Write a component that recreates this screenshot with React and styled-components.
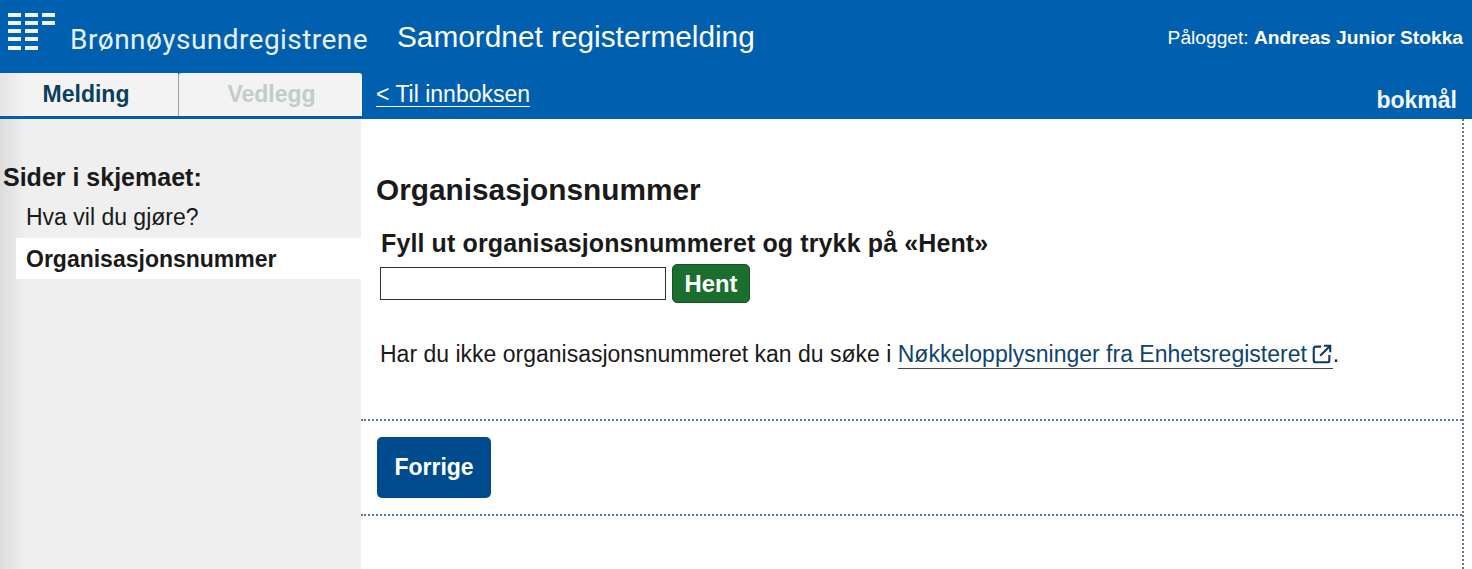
import React from 'react';
import styled, {createGlobalStyle} from 'styled-components';

const GlobalStyle = createGlobalStyle`
  html, body {
    margin: 0;
    padding: 0;
    background: #fff;
    overflow: hidden;
  }
  body {
    font-family: "Liberation Sans", Arial, sans-serif;
    color: #1a1a1a;
  }
`;

const Page = styled.div`
  width: 1472px;
  height: 569px;
  display: flex;
  flex-direction: column;
  overflow: hidden;
`;

const Header = styled.header`
  height: 119px;
  flex: none;
  background: #0060af;
  color: #fff;
  display: flex;
  flex-direction: column;
`;

const TopBar = styled.div`
  height: 73px;
  flex: none;
  display: flex;
  align-items: flex-start;
`;

const Logo = styled.div`
  width: 397px;
  flex: none;
  display: flex;
  padding: 12px 0 0 8px;
  box-sizing: border-box;
`;

const LogoMark = styled.svg`
  width: 47px;
  height: 39px;
  flex: none;
`;

const LogoName = styled.span`
  font-family: Roboto, sans-serif;
  font-size: 28px;
  line-height: 30px;
  letter-spacing: 0.45px;
  color: #e6f1f8;
  margin: 13px 0 0 15px;
  white-space: nowrap;
`;

const AppTitle = styled.div`
  font-size: 29.8px;
  line-height: 34px;
  margin-top: 20px;
  color: #fff;
`;

const User = styled.div`
  margin-left: auto;
  margin-top: 27px;
  margin-right: 9px;
  font-size: 19.2px;
  line-height: 21px;
`;

const NavBar = styled.div`
  flex: 1;
  display: flex;
`;

const Tabs = styled.div`
  width: 362px;
  flex: none;
  height: 43px;
  display: flex;
`;

const Tab = styled.div`
  flex: none;
  width: ${p => p.$width}px;
  box-sizing: border-box;
  padding: ${p => p.$active ? '0 6px 0 0' : '0 0 0 2px'};
  background: ${p => p.$active
    ? 'linear-gradient(to right, #e4e4e4, #f3f3f3 24px)'
    : '#f3f3f3'};
  border-left: ${p => p.$active ? 'none' : '1px solid #9aa3a8'};
  border-radius: ${p => p.$active ? '0' : '3px 3px 0 0'};
  color: ${p => p.$active ? '#0b3f5e' : '#c0cdcb'};
  font-size: 23px;
  font-weight: 700;
  text-align: center;
  line-height: 43px;
`;

const BackLink = styled.a`
  margin: 9px 0 0 14px;
  height: 24px;
  color: #fff;
  font-size: 23px;
  line-height: 24px;
  border-bottom: 1px solid #fff;
  text-decoration: none;
`;

const Language = styled.div`
  margin: 15px 15px 0 auto;
  font-size: 23px;
  font-weight: 700;
  line-height: 24px;
  color: #f2f7fb;
`;

const Body = styled.div`
  flex: 1;
  display: flex;
  min-height: 0;
`;

const Sidebar = styled.aside`
  width: 361px;
  flex: none;
  box-sizing: border-box;
  padding-top: 45px;
  background: linear-gradient(to right, #dcdcdc, #efefef 24px);
`;

const SidebarTitle = styled.div`
  font-size: 25px;
  font-weight: 700;
  line-height: 27px;
  margin-left: 3px;
`;

const SidebarList = styled.ul`
  list-style: none;
  margin: 7px 0 0 16px;
  padding: 0;
`;

const SidebarItem = styled.li`
  height: ${p => p.$current ? '41px' : '40px'};
  padding-left: 10px;
  font-size: 23px;
  line-height: ${p => p.$current ? '42px' : '38px'};
  font-weight: ${p => p.$current ? 700 : 400};
  background: ${p => p.$current ? '#fff' : 'transparent'};
`;

const Main = styled.main`
  width: 1103px;
  flex: none;
  box-sizing: border-box;
  border-right: 2px dotted #6b7780;
  display: flex;
  flex-direction: column;
`;

const Content = styled.div`
  height: 302px;
  flex: none;
  box-sizing: border-box;
  padding: 55px 0 0 15px;
  border-bottom: 2px dotted #4f7a9c;
`;

const Heading = styled.h1`
  margin: 0;
  font-size: 29.8px;
  line-height: 32px;
  font-weight: 700;
`;

const FieldLabel = styled.label`
  display: block;
  margin: 24px 0 0 5px;
  font-size: 25px;
  letter-spacing: 0.12px;
  font-weight: 700;
  line-height: 27px;
`;

const FieldRow = styled.div`
  display: flex;
  align-items: center;
  gap: 6px;
  margin: 7px 0 0 4px;
`;

const TextField = styled.input`
  width: 286px;
  height: 33px;
  box-sizing: border-box;
  border: 1px solid #333;
  background: #fff;
  padding: 0 4px;
  margin: 0;
`;

const FetchButton = styled.button`
  width: 78px;
  height: 39px;
  box-sizing: border-box;
  border: 1px solid #14502a;
  border-radius: 5px;
  background: #1a6e2e;
  color: #fff;
  font-family: inherit;
  font-size: 23.8px;
  font-weight: 700;
  padding: 0;
`;

const Help = styled.p`
  margin: 38px 0 0 4px;
  font-size: 23px;
  line-height: 26px;
  white-space: nowrap;
`;

const HelpLink = styled.a`
  color: #0f4470;
  text-decoration: none;
  border-bottom: 1px solid #444;
  padding-bottom: 1px;
`;

const ExternalIcon = styled.svg`
  width: 22px;
  height: 22px;
  margin-left: 4px;
  vertical-align: -3px;
`;

const Actions = styled.div`
  height: 95px;
  flex: none;
  box-sizing: border-box;
  padding: 16px 0 0 16px;
  border-bottom: 2px dotted #4f7a9c;
`;

const PrevButton = styled.button`
  width: 114px;
  height: 61px;
  box-sizing: border-box;
  border: 0;
  border-radius: 5px;
  background: #004b8d;
  color: #fff;
  font-family: inherit;
  font-size: 23px;
  font-weight: 700;
  padding: 0;
`;

const App = () => (
  <Page>
    <GlobalStyle/>
    <Header>
      <TopBar>
        <Logo>
          <LogoMark viewBox="0 0 47 39">
            <g fill="#eef5fa">
              <rect x="0" y="1" width="13" height="4"/>
              <rect x="17" y="1" width="13" height="4"/>
              <rect x="34" y="1" width="13" height="4"/>
              <rect x="0" y="9" width="13" height="4"/>
              <rect x="17" y="9" width="13" height="4"/>
              <rect x="34" y="9" width="13" height="4"/>
              <rect x="0" y="17" width="13" height="4"/>
              <rect x="17" y="17" width="13" height="4"/>
              <rect x="0" y="25" width="13" height="4"/>
              <rect x="17" y="25" width="13" height="4"/>
              <rect x="0" y="34" width="13" height="4"/>
              <rect x="17" y="34" width="13" height="4"/>
            </g>
          </LogoMark>
          <LogoName>Brønnøysundregistrene</LogoName>
        </Logo>
        <AppTitle>Samordnet registermelding</AppTitle>
        <User>Pålogget: <b>Andreas Junior Stokka</b></User>
      </TopBar>
      <NavBar>
        <Tabs>
          <Tab $active $width={178}>Melding</Tab>
          <Tab $width={184}>Vedlegg</Tab>
        </Tabs>
        <BackLink href="#">&lt; Til innboksen</BackLink>
        <Language>bokmål</Language>
      </NavBar>
    </Header>
    <Body>
      <Sidebar>
        <SidebarTitle>Sider i skjemaet:</SidebarTitle>
        <SidebarList>
          <SidebarItem>Hva vil du gjøre?</SidebarItem>
          <SidebarItem $current>Organisasjonsnummer</SidebarItem>
        </SidebarList>
      </Sidebar>
      <Main>
        <Content>
          <Heading>Organisasjonsnummer</Heading>
          <FieldLabel htmlFor="orgnr">Fyll ut organisasjonsnummeret og trykk på «Hent»</FieldLabel>
          <FieldRow>
            <TextField id="orgnr" type="text"/>
            <FetchButton type="button">Hent</FetchButton>
          </FieldRow>
          <Help>
            Har du ikke organisasjonsnummeret kan du søke i{' '}
            <HelpLink href="#">
              Nøkkelopplysninger fra Enhetsregisteret
              <ExternalIcon viewBox="0 0 24 24" fill="none" stroke="#12395f" strokeWidth="2.3">
                <path d="M11 4H5a2 2 0 0 0-2 2v13a2 2 0 0 0 2 2h13a2 2 0 0 0 2-2v-6"/>
                <path d="M10 14L21 3M14 3h7v7"/>
              </ExternalIcon>
            </HelpLink>.
          </Help>
        </Content>
        <Actions>
          <PrevButton type="button">Forrige</PrevButton>
        </Actions>
      </Main>
    </Body>
  </Page>
);

export default App;
